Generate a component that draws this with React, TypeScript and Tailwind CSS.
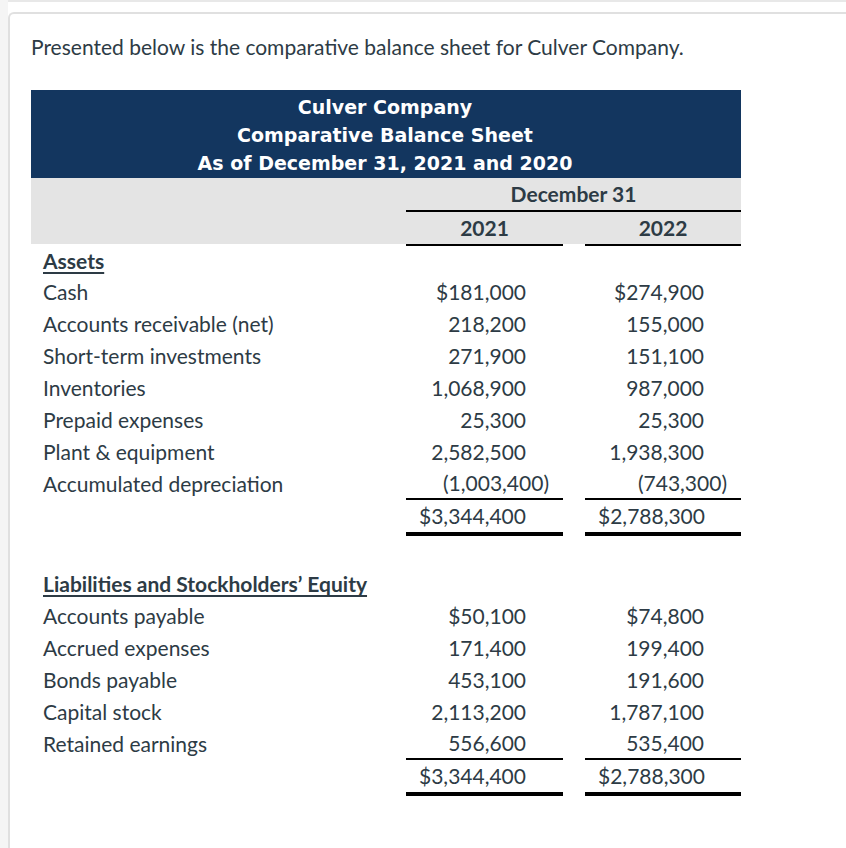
const assets = [
  { label: "Cash", a: "$181,000", b: "$274,900" },
  { label: "Accounts receivable (net)", a: "218,200", b: "155,000" },
  { label: "Short-term investments", a: "271,900", b: "151,100" },
  { label: "Inventories", a: "1,068,900", b: "987,000" },
  { label: "Prepaid expenses", a: "25,300", b: "25,300" },
  { label: "Plant & equipment", a: "2,582,500", b: "1,938,300" },
  { label: "Accumulated depreciation", a: "(1,003,400)", b: "(743,300)", line: true },
];

const liabilities = [
  { label: "Accounts payable", a: "$50,100", b: "$74,800" },
  { label: "Accrued expenses", a: "171,400", b: "199,400" },
  { label: "Bonds payable", a: "453,100", b: "191,600" },
  { label: "Capital stock", a: "2,113,200", b: "1,787,100" },
  { label: "Retained earnings", a: "556,600", b: "535,400", line: true },
];

type Row = { label: string; a: string; b: string; line?: boolean };

const Cell = ({ value, width, line }: { value: string; width: string; line?: boolean }) => {
  const paren = value.startsWith("(");
  return (
    <div
      className={`${width} h-full flex items-center justify-end ${paren ? "pr-[14px]" : "pr-[37px]"} ${
        line ? "border-b-2 border-black" : ""
      }`}
    >
      {value}
    </div>
  );
};

const DataRow = ({ row }: { row: Row }) => (
  <div className="flex h-[32px]">
    <div className="w-[375px] pl-[12px] flex items-center">{row.label}</div>
    <Cell value={row.a} width="w-[157px]" line={row.line} />
    <div className="w-[22px]" />
    <Cell value={row.b} width="w-[156px]" line={row.line} />
  </div>
);

const TotalRow = ({ a, b }: { a: string; b: string }) => (
  <div className="flex h-[36px]">
    <div className="w-[375px]" />
    <div className="w-[157px] flex items-center pl-[13px] border-b-4 border-black">{a}</div>
    <div className="w-[22px]" />
    <div className="w-[156px] flex items-center pl-[13px] border-b-4 border-black">{b}</div>
  </div>
);

export default function App() {
  return (
    <div className="flex h-[848px] w-[846px] bg-white overflow-hidden font-['Lato',sans-serif] text-[#2d3b45]">
      <div className="w-[8px] bg-[#f5f5f5]" />
      <div className="flex-1 flex flex-col">
        <div className="h-[2px] bg-[#e8e8e8]" />
        <div className="mt-[10px] flex-1 border-t-2 border-l-2 border-[#e0e0e0] rounded-tl-[6px] pl-[21px]">
          <p className="text-[21px] pt-[21px] leading-[24px]">
            Presented below is the comparative balance sheet for Culver Company.
          </p>

          <div className="mt-[31px] w-[710px] text-[21px]">
            <div className="h-[88px] bg-[#13365f] text-white flex flex-col items-center justify-center pt-[1px] font-['DejaVu_Sans',sans-serif] font-bold text-[19px] leading-[28px] pr-[2px]">
              <div>Culver Company</div>
              <div>Comparative Balance Sheet</div>
              <div>As of December 31, 2021 and 2020</div>
            </div>

            <div className="bg-[#e4e4e4] font-bold">
              <div className="flex h-[34px]">
                <div className="w-[375px]" />
                <div className="w-[335px] flex items-center justify-center border-b-2 border-black">
                  December 31
                </div>
              </div>
            </div>
            <div className="flex h-[34px] font-bold">
              <div className="w-[375px] h-[32px] bg-[#e4e4e4]" />
              <div className="w-[157px] flex items-center justify-center bg-[#e4e4e4] border-b-2 border-black">
                2021
              </div>
              <div className="w-[22px] h-[32px] bg-[#e4e4e4]" />
              <div className="w-[156px] flex items-center justify-center bg-[#e4e4e4] border-b-2 border-black">
                2022
              </div>
            </div>

            <div className="h-[30px] pl-[12px] flex items-center">
              <span className="font-bold underline underline-offset-[3px]">Assets</span>
            </div>
            {assets.map((r) => (
              <DataRow key={r.label} row={r} />
            ))}
            <TotalRow a="$3,344,400" b="$2,788,300" />

            <div className="h-[32px]" />
            <div className="h-[32px] pl-[12px] flex items-center">
              <span className="font-bold underline underline-offset-[3px]">
                Liabilities and Stockholders’ Equity
              </span>
            </div>
            {liabilities.map((r) => (
              <DataRow key={r.label} row={r} />
            ))}
            <TotalRow a="$3,344,400" b="$2,788,300" />
          </div>
        </div>
      </div>
    </div>
  );
}
